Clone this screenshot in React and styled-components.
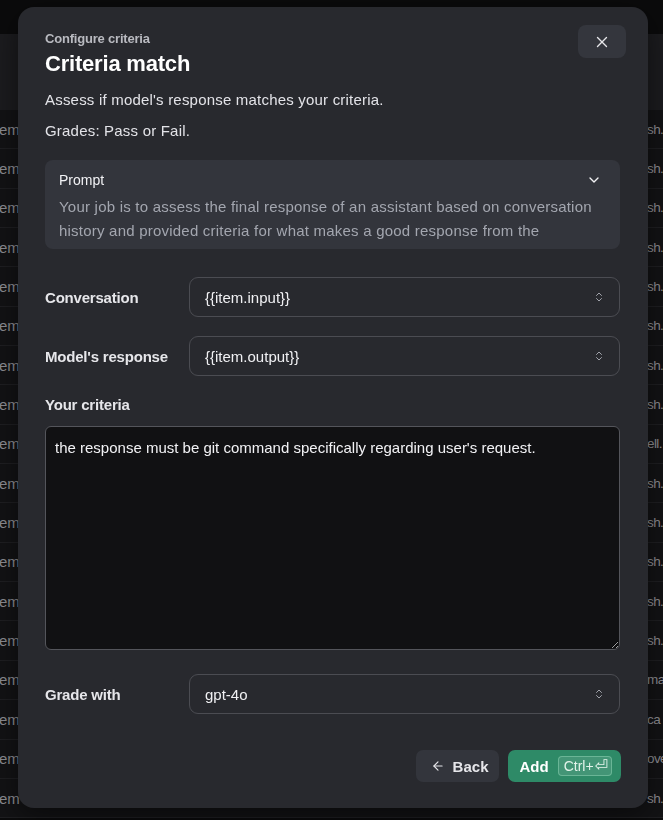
import React from "react";
import styled, { createGlobalStyle } from "styled-components";
import { X, ChevronDown, ChevronsUpDown, ArrowLeft } from "lucide-react";

const GlobalStyle = createGlobalStyle`
  html, body {
    margin: 0;
    padding: 0;
    background: #0b0b0c;
    font-family: "Liberation Sans", Arial, sans-serif;
    overflow: hidden;
  }
  * { box-sizing: border-box; }
`;

// right-hand cell endings that peek out beside the dialog
const rowEnds = [
  "sh.", "sh.", "sh.", "sh.", "sh.", "sh.", "sh.", "sh.",
  "ell.", "sh.", "sh.", "sh.", "sh.", "sh.", "ma", "ca", "ove", "sh.",
];

function App() {
  return (
    <>
      <GlobalStyle />
      <Page>
        <TopBar />
        <Toolbar />
        <Rows>
          {rowEnds.map((end, i) => (
            <Row key={i}>
              <LeftCell>em</LeftCell>
              <RightCell>{end}</RightCell>
            </Row>
          ))}
        </Rows>
      </Page>

      <Dialog>
        <CloseButton aria-label="Close">
          <X size={18} strokeWidth={1.8} />
        </CloseButton>

        <Eyebrow>Configure criteria</Eyebrow>
        <Title>Criteria match</Title>
        <Desc>Assess if model's response matches your criteria.</Desc>
        <Desc $top={9}>Grades: Pass or Fail.</Desc>

        <PromptBox>
          <PromptHead>
            <span>Prompt</span>
            <ChevronDown size={16} strokeWidth={2} />
          </PromptHead>
          <PromptText>
            Your job is to assess the final response of an assistant based on
            conversation history and provided criteria for what makes a good
            response from the assistant. Here is the data:
          </PromptText>
        </PromptBox>

        <FieldRow $top={28}>
          <FieldLabel>Conversation</FieldLabel>
          <Select>
            <span>{"{{item.input}}"}</span>
            <ChevronsUpDown size={12} strokeWidth={2} />
          </Select>
        </FieldRow>

        <FieldRow $top={19}>
          <FieldLabel>Model's response</FieldLabel>
          <Select>
            <span>{"{{item.output}}"}</span>
            <ChevronsUpDown size={12} strokeWidth={2} />
          </Select>
        </FieldRow>

        <SectionLabel>Your criteria</SectionLabel>
        <Criteria
          readOnly
          value="the response must be git command specifically regarding user's request."
        />

        <FieldRow $top={24}>
          <FieldLabel>Grade with</FieldLabel>
          <Select>
            <span>gpt-4o</span>
            <ChevronsUpDown size={12} strokeWidth={2} />
          </Select>
        </FieldRow>

        <Footer>
          <BackButton>
            <ArrowLeft size={14} strokeWidth={2} />
            Back
          </BackButton>
          <AddButton>
            Add
            <Kbd>
              Ctrl+<ReturnGlyph>⏎</ReturnGlyph>
            </Kbd>
          </AddButton>
        </Footer>
      </Dialog>
    </>
  );
}

export default App;

const Page = styled.div`
  width: 663px;
  height: 820px;
  background: #0b0b0c;
  overflow: hidden;
`;

const TopBar = styled.div`
  height: 34px;
  background: #0b0b0c;
`;

const Toolbar = styled.div`
  height: 76px;
  background: #1c1c1f;
`;

const Rows = styled.div`
  display: flex;
  flex-direction: column;
`;

const Row = styled.div`
  height: 39.35px;
  display: flex;
  align-items: center;
  justify-content: space-between;
  border-bottom: 1px solid #1f1f22;
  background: #131315;
  font-size: 15px;
  color: #8e8e93;
  white-space: nowrap;
`;

const LeftCell = styled.span`
  margin-left: -1px;
`;

const RightCell = styled.span`
  width: 16px;
  font-size: 13.5px;
  letter-spacing: -0.6px;
  white-space: nowrap;
`;

const Dialog = styled.div`
  position: fixed;
  top: 7px;
  left: 18px;
  width: 630px;
  height: 801px;
  background: #28292e;
  border-radius: 16px;
  padding: 23px 28px 0 27px;
  display: flex;
  flex-direction: column;
  color: #ececf1;
  box-shadow: 0 8px 30px rgba(0, 0, 0, 0.5);
`;

const CloseButton = styled.button`
  position: absolute;
  top: 18px;
  right: 22px;
  width: 48px;
  height: 33px;
  border: none;
  border-radius: 8px;
  background: #34363d;
  color: #e6e6ea;
  display: flex;
  align-items: center;
  justify-content: center;
  padding: 0;
`;

const Eyebrow = styled.div`
  font-size: 13px;
  line-height: 18px;
  font-weight: 700;
  color: #b9bac0;
  letter-spacing: -0.2px;
`;

const Title = styled.h1`
  margin: 2px 0 0;
  font-size: 22px;
  line-height: 28px;
  font-weight: 700;
  color: #ffffff;
  letter-spacing: -0.2px;
`;

const Desc = styled.p`
  margin: ${(p) => p.$top ?? 11}px 0 0;
  font-size: 15px;
  line-height: 22px;
  letter-spacing: 0.2px;
  color: #e3e3e8;
`;

const PromptBox = styled.div`
  margin-top: 18px;
  height: 89px;
  overflow: hidden;
  background: #33353c;
  border-radius: 8px;
  padding: 10px 18px 0 14px;
`;

const PromptHead = styled.div`
  display: flex;
  align-items: center;
  justify-content: space-between;
  font-size: 14px;
  line-height: 20px;
  font-weight: 500;
  color: #f2f2f5;
`;

const PromptText = styled.p`
  margin: 5px 0 0;
  font-size: 15px;
  line-height: 24px;
  letter-spacing: 0.22px;
  color: #a3a6af;
`;

const FieldRow = styled.div`
  margin-top: ${(p) => p.$top}px;
  display: flex;
  align-items: center;
`;

const FieldLabel = styled.div`
  width: 144px;
  flex-shrink: 0;
  font-size: 15px;
  font-weight: 700;
  letter-spacing: -0.2px;
  color: #e6e6ea;
`;

const Select = styled.div`
  flex: 1;
  height: 40px;
  border: 1px solid #4b4c52;
  border-radius: 9px;
  padding: 0 14px 0 15px;
  display: flex;
  align-items: center;
  justify-content: space-between;
  font-size: 15px;
  color: #f0f0f3;
  svg {
    color: #a0a2aa;
  }
`;

const SectionLabel = styled.div`
  margin-top: 19px;
  font-size: 15px;
  line-height: 20px;
  font-weight: 700;
  letter-spacing: -0.2px;
  color: #e6e6ea;
`;

const Criteria = styled.textarea`
  margin-top: 11px;
  height: 224px;
  width: 100%;
  resize: vertical;
  background: #111113;
  border: 1px solid #54555b;
  border-radius: 6px;
  padding: 11px 9px;
  font-family: "Liberation Sans", Arial, sans-serif;
  font-size: 15px;
  line-height: 20px;
  color: #f2f2f5;
  outline: none;
`;

const Footer = styled.div`
  margin-top: 36px;
  margin-right: -1px;
  display: flex;
  justify-content: flex-end;
  gap: 9px;
`;

const BackButton = styled.button`
  height: 32px;
  padding: 0 11px 0 15px;
  border: none;
  border-radius: 7px;
  background: #33353c;
  color: #e6e6ea;
  font-family: "Liberation Sans", Arial, sans-serif;
  font-size: 15px;
  font-weight: 700;
  display: flex;
  align-items: center;
  gap: 8px;
`;

const AddButton = styled.button`
  height: 32px;
  padding: 0 9px 0 11px;
  border: none;
  border-radius: 7px;
  background: #2e8a67;
  color: #ffffff;
  font-family: "Liberation Sans", Arial, sans-serif;
  font-size: 15px;
  font-weight: 700;
  display: flex;
  align-items: center;
  gap: 9px;
`;

const Kbd = styled.span`
  height: 20px;
  padding: 0 3px 0 5px;
  border: 1px solid rgba(200, 255, 225, 0.3);
  border-radius: 4px;
  background: rgba(255, 255, 255, 0.1);
  font-size: 14px;
  font-weight: 400;
  line-height: 18px;
  color: #e3f3ea;
  display: flex;
  align-items: center;
  font-family: "Liberation Sans", "DejaVu Sans", sans-serif;
`;

const ReturnGlyph = styled.span`
  font-family: "DejaVu Sans", sans-serif;
  font-size: 16px;
  line-height: 16px;
  margin-left: 1px;
`;
